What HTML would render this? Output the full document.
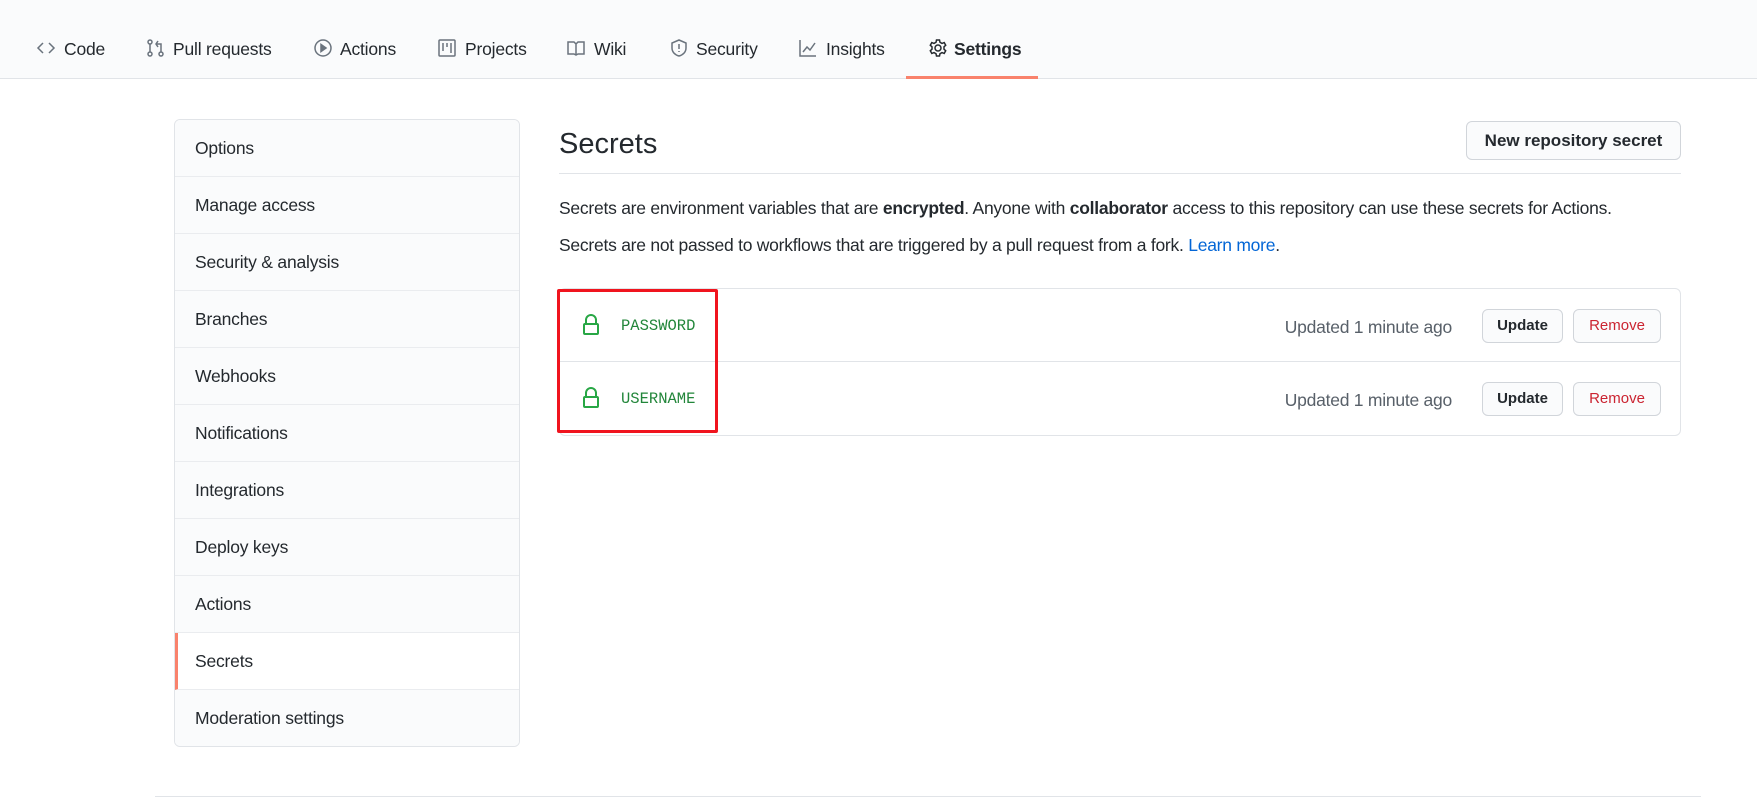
<!DOCTYPE html>
<html><head><meta charset="utf-8"><style>
*{box-sizing:border-box;margin:0;padding:0}
body{width:1757px;height:800px;background:#fff;font-family:"Liberation Sans",sans-serif;color:#24292e;position:relative;overflow:hidden}
.nav{position:absolute;left:0;top:0;width:1757px;height:79px;background:#fafbfc;border-bottom:1px solid #e1e4e8}
.tab{position:absolute;top:38px;font-size:17.5px;line-height:22px;color:#24292e;white-space:nowrap;letter-spacing:-0.2px}
.ic{position:absolute;top:38px;width:20px;height:20px}
.ic svg{width:20px;height:20px;fill:none;stroke:#6a737d;stroke-width:1.5}
.ul{position:absolute;left:906px;top:76px;width:132px;height:3px;background:#f9826c}
.side{position:absolute;left:174px;top:119px;width:346px;height:628px;border:1px solid #e1e4e8;border-radius:6px;overflow:hidden}
.si{height:57px;border-bottom:1px solid #eaecef;padding-left:20px;line-height:56px;font-size:17.5px;background:#fafbfc;color:#24292e;letter-spacing:-0.2px}
.si:last-child{border-bottom:none}
.si.sel{background:#fff;border-left:3px solid #f9826c;padding-left:17px}
.abs{position:absolute}
.btn{position:absolute;border:1px solid #d1d5da;border-radius:6px;background:#fafbfc;font-weight:bold;text-align:center}
.p{font-size:17.5px;line-height:22px;white-space:nowrap;letter-spacing:-0.25px}
</style></head><body>
<div class="nav">
<div class="ic" style="left:36px"><svg viewBox="0 0 20 20"><path d="M7 5l-5 5 5 5M13 5l5 5-5 5"/></svg></div><div class="tab" style="left:64px">Code</div>
<div class="ic" style="left:146px"><svg viewBox="0 0 20 20"><circle cx="4" cy="4" r="2"/><circle cx="4" cy="16" r="2"/><circle cx="15" cy="16" r="2"/><path d="M4 6v8M15 14V6h-5M12 3l-2 3 2 3"/></svg></div><div class="tab" style="left:173px">Pull requests</div>
<div class="ic" style="left:313px"><svg viewBox="0 0 20 20"><circle cx="10" cy="10" r="8"/><path d="M8 6.5v7l5-3.5z" fill="#6a737d"/></svg></div><div class="tab" style="left:340px">Actions</div>
<div class="ic" style="left:437px"><svg viewBox="0 0 20 20"><rect x="2" y="2" width="16" height="16" rx="1"/><path d="M6 5v8M10 5v4M14 5v10"/></svg></div><div class="tab" style="left:465px">Projects</div>
<div class="ic" style="left:566px"><svg viewBox="0 0 20 20"><path d="M2 4h6l2 2 2-2h6v12h-6l-2 1-2-1H2zM10 6v11"/></svg></div><div class="tab" style="left:594px">Wiki</div>
<div class="ic" style="left:669px"><svg viewBox="0 0 20 20"><path d="M10 2l7 3v5c0 4-3 7-7 8-4-1-7-4-7-8V5z"/><path d="M10 6v5M10 13v1"/></svg></div><div class="tab" style="left:696px">Security</div>
<div class="ic" style="left:798px"><svg viewBox="0 0 20 20"><path d="M2 2v16h16M5 14l4-5 3 3 5-7"/></svg></div><div class="tab" style="left:826px">Insights</div>
<div class="ic" style="left:928px"><svg viewBox="0 0 20 20" style="stroke:#24292e"><circle cx="10" cy="10" r="3"/><path d="M8.5 2h3l.5 2.3 2 1.1 2.2-.8 1.5 2.6-1.7 1.6v2.4l1.7 1.6-1.5 2.6-2.2-.8-2 1.1-.5 2.3h-3L8 15.7l-2-1.1-2.2.8-1.5-2.6L4 11.2V8.8L2.3 7.2l1.5-2.6 2.2.8 2-1.1z"/></svg></div><div class="tab" style="left:954px;font-weight:bold">Settings</div>
<div class="ul"></div>
</div>
<div class="side">
<div class="si">Options</div><div class="si">Manage access</div><div class="si">Security &amp; analysis</div><div class="si">Branches</div><div class="si">Webhooks</div><div class="si">Notifications</div><div class="si">Integrations</div><div class="si">Deploy keys</div><div class="si">Actions</div><div class="si sel">Secrets</div><div class="si">Moderation settings</div>
</div>
<div class="abs" style="left:559px;top:126px;font-size:29px;line-height:36px">Secrets</div>
<div class="btn" style="left:1466px;top:121px;width:215px;height:39px;line-height:37px;font-size:17px">New repository secret</div>
<div class="abs" style="left:559px;top:173px;width:1122px;height:1px;background:#e1e4e8"></div>
<div class="abs p" style="left:559px;top:197px">Secrets are environment variables that are <b>encrypted</b>. Anyone with <b>collaborator</b> access to this repository can use these secrets for Actions.</div>
<div class="abs p" style="left:559px;top:234px">Secrets are not passed to workflows that are triggered by a pull request from a fork. <span style="color:#0366d6">Learn more</span>.</div>
<div class="abs" style="left:559px;top:288px;width:1122px;height:148px;border:1px solid #e1e4e8;border-radius:6px"></div>
<div class="abs" style="left:560px;top:361px;width:1120px;height:1px;background:#e1e4e8"></div>
<div class="abs" style="left:557px;top:289px;width:161px;height:144px;border:3px solid #f0141e;border-radius:2px"></div>
<svg class="abs" style="left:582px;top:314px" width="18" height="22" viewBox="0 0 18 22" fill="none" stroke="#28a745" stroke-width="2"><path d="M4 10V6a5 5 0 0 1 10 0v4"/><rect x="2" y="10" width="14" height="10" rx="1"/></svg>
<svg class="abs" style="left:582px;top:387px" width="18" height="22" viewBox="0 0 18 22" fill="none" stroke="#28a745" stroke-width="2"><path d="M4 10V6a5 5 0 0 1 10 0v4"/><rect x="2" y="10" width="14" height="10" rx="1"/></svg>
<div class="abs" style="left:621px;top:317px;font-family:'Liberation Mono',monospace;font-size:15.5px;color:#22863a">PASSWORD</div>
<div class="abs" style="left:621px;top:390px;font-family:'Liberation Mono',monospace;font-size:15.5px;color:#22863a">USERNAME</div>
<div class="abs p" style="right:305px;top:316px;color:#586069">Updated 1 minute ago</div>
<div class="abs p" style="right:305px;top:389px;color:#586069">Updated 1 minute ago</div>
<div class="btn" style="left:1482px;top:309px;width:81px;height:34px;line-height:32px;font-size:15px">Update</div>
<div class="btn" style="left:1573px;top:309px;width:88px;height:34px;line-height:32px;font-size:15px;font-weight:normal;color:#cb2431">Remove</div>
<div class="btn" style="left:1482px;top:382px;width:81px;height:34px;line-height:32px;font-size:15px">Update</div>
<div class="btn" style="left:1573px;top:382px;width:88px;height:34px;line-height:32px;font-size:15px;font-weight:normal;color:#cb2431">Remove</div>
<div class="abs" style="left:155px;top:796px;width:1546px;height:1px;background:#e1e4e8"></div>
</body></html>
